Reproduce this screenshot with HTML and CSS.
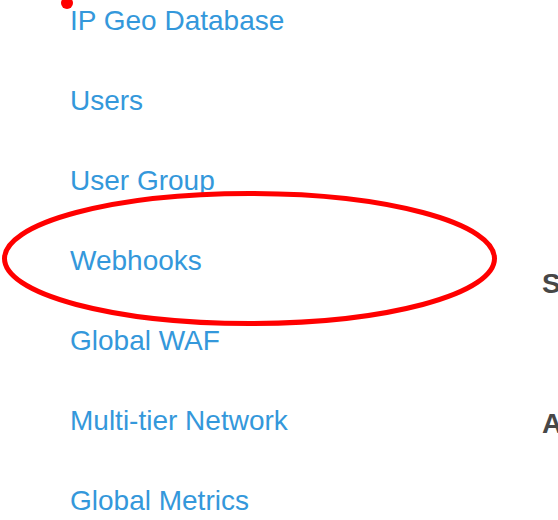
FILE: index.html
```html
<!DOCTYPE html>
<html>
<head>
<meta charset="utf-8">
<link rel="stylesheet" href="styles.css">
</head>
<body>
<div class="page">
  <nav class="sidebar">
    <ul class="menu">
      <li><a href="#">IP Geo Database</a></li>
      <li><a href="#">Users</a></li>
      <li><a href="#">User Group</a></li>
      <li><a href="#">Webhooks</a></li>
      <li><a href="#">Global WAF</a></li>
      <li><a href="#">Multi-tier Network</a></li>
      <li><a href="#">Global Metrics</a></li>
    </ul>
  </nav>
  <main class="content">
    <h2 class="heading">Settings</h2>
    <h2 class="heading">Advanced</h2>
  </main>
  <span class="dot"></span>
  <svg class="circle" width="500" height="140" viewBox="0 0 500 140">
    <ellipse cx="249.5" cy="67.5" rx="245" ry="65" fill="none" stroke="#ff0000" stroke-width="5"/>
  </svg>
</div>
</body>
</html>
```
FILE: styles.css
```css
html, body {
  margin: 0;
  padding: 0;
  background: #ffffff;
  overflow: hidden;
}
.page {
  position: relative;
  width: 558px;
  height: 520px;
  display: flex;
  overflow: hidden;
  font-family: "Liberation Sans", Arial, sans-serif;
}
.sidebar {
  flex: none;
  width: 542px;
}
.menu {
  list-style: none;
  margin: 0;
  padding: 5px 0 0 70px;
  display: flex;
  flex-direction: column;
  gap: 48px;
}
.menu li {
  font-size: 28px;
  line-height: 32px;
  white-space: nowrap;
}
.menu a {
  color: #3498db;
  text-decoration: none;
}
.content {
  flex: none;
  padding-top: 268px;
  white-space: nowrap;
}
.heading {
  margin: 0 0 108px 0;
  font-size: 28px;
  line-height: 32px;
  font-weight: bold;
  color: #474747;
}
.dot {
  position: absolute;
  left: 61px;
  top: -3px;
  width: 12px;
  height: 12px;
  border-radius: 50%;
  background: #ff0000;
}
.circle {
  position: absolute;
  left: 0;
  top: 191px;
}
```
